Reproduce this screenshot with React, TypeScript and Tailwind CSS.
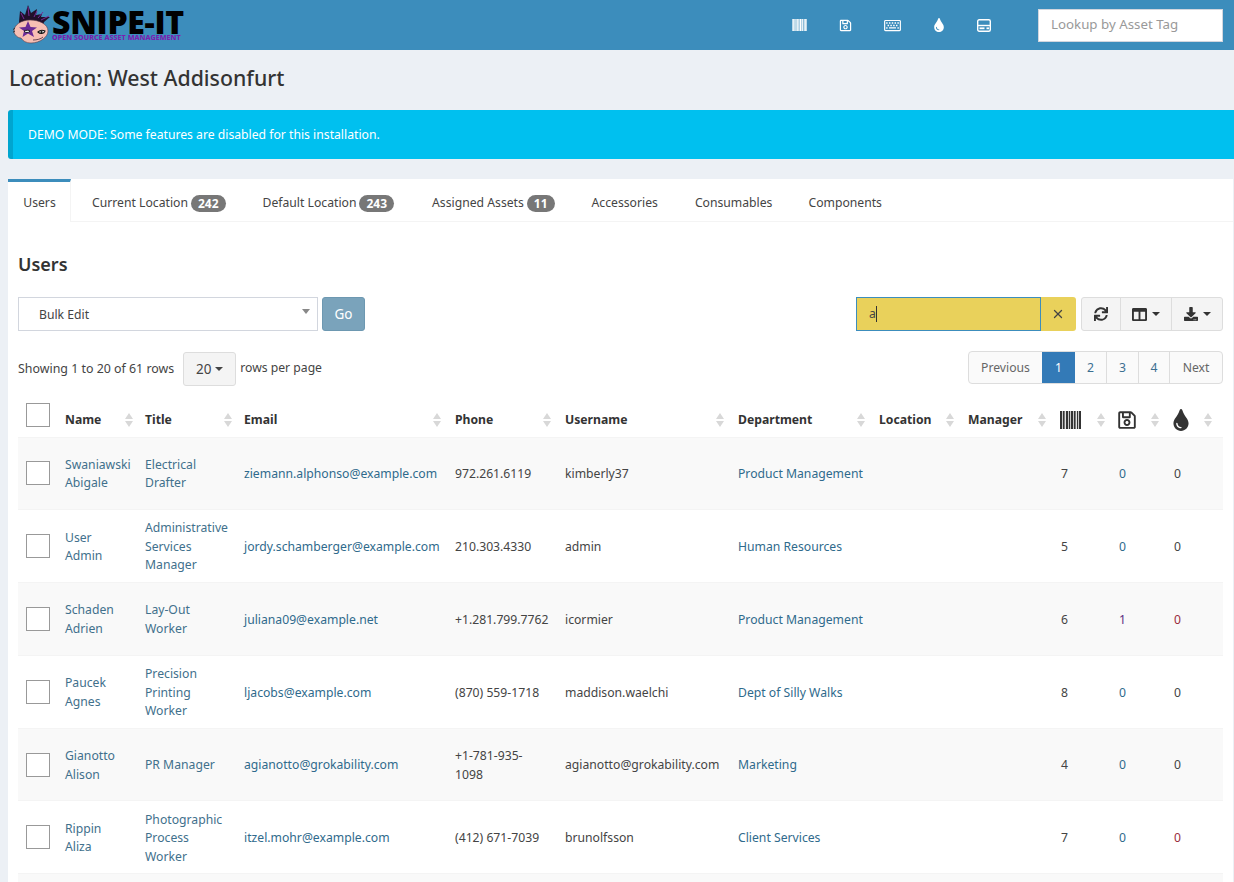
import { FaColumns, FaDownload, FaRegKeyboard, FaRegSave, FaSync, FaTint } from "react-icons/fa";
import { X } from "lucide-react";

const LINK = "text-[#2f6a8c]";
const NAME_LINK = "text-[#41708c]";
const PLAIN = "text-[#444]";

const users = [
  { name: ["Swaniawski", "Abigale"], title: ["Electrical", "Drafter"], email: "ziemann.alphonso@example.com", phone: ["972.261.6119"], username: "kimberly37", dept: "Product Management", counts: ["7", "0", "0"], colors: [PLAIN, LINK, PLAIN] },
  { name: ["User", "Admin"], title: ["Administrative", "Services", "Manager"], email: "jordy.schamberger@example.com", phone: ["210.303.4330"], username: "admin", dept: "Human Resources", counts: ["5", "0", "0"], colors: [PLAIN, LINK, PLAIN] },
  { name: ["Schaden", "Adrien"], title: ["Lay-Out", "Worker"], email: "juliana09@example.net", phone: ["+1.281.799.7762"], username: "icormier", dept: "Product Management", counts: ["6", "1", "0"], colors: [PLAIN, "text-[#5a2d82]", "text-[#9a2b3c]"] },
  { name: ["Paucek", "Agnes"], title: ["Precision", "Printing", "Worker"], email: "ljacobs@example.com", phone: ["(870) 559-1718"], username: "maddison.waelchi", dept: "Dept of Silly Walks", counts: ["8", "0", "0"], colors: [PLAIN, LINK, PLAIN] },
  { name: ["Gianotto", "Alison"], title: ["PR Manager"], email: "agianotto@grokability.com", phone: ["+1-781-935-", "1098"], username: "agianotto@grokability.com", dept: "Marketing", counts: ["4", "0", "0"], colors: [PLAIN, LINK, PLAIN] },
  { name: ["Rippin", "Aliza"], title: ["Photographic", "Process", "Worker"], email: "itzel.mohr@example.com", phone: ["(412) 671-7039"], username: "brunolfsson", dept: "Client Services", counts: ["7", "0", "0"], colors: [PLAIN, LINK, "text-[#9a2b3c]"] },
];

const columnWidths = [39, 80, 99, 211, 110, 173, 141, 89, 92, 58, 55, 58];

const Barcode = ({ className }: { className: string }) => (
  <svg viewBox="0 0 21 18" className={className} fill="currentColor" stroke="currentColor">
    <path d="M0 0h2v18H0zM3 0h1.500v18H3zM6 0h2v18H6zM9 0h1v18H9zM11 0h2v18h-2zM14 0h1.500v18H14zM17 0h1v18h-1zM19 0h2v18h-2z" />
  </svg>
);

const HddIcon = ({ className }: { className: string }) => (
  <svg viewBox="0 0 14 13" className={className} fill="none" stroke="currentColor" strokeWidth="1.400">
    <rect x=".7" y=".7" width="12.600" height="11.600" rx="1.500" />
    <path d="M1 6.500h12" />
    <path d="M2.500 9.300h5" strokeWidth="1.800" />
    <path d="M9.500 9.300h2.500" strokeWidth="1.800" />
  </svg>
);

const Lines = ({ lines }: { lines: string[] }) => (
  <>
    {lines.map((line) => (
      <div key={line}>{line}</div>
    ))}
  </>
);

const SortArrows = () => (
  <span className="flex flex-col gap-[2px] text-[#d8d8d8]">
    <span className="h-0 w-0 border-x-[4px] border-b-[6px] border-x-transparent border-b-current" />
    <span className="h-0 w-0 border-x-[4px] border-t-[6px] border-x-transparent border-t-current" />
  </span>
);

const Caret = () => <span className="inline-block h-0 w-0 border-x-[4px] border-t-[4px] border-x-transparent border-t-current" />;

const Mascot = () => (
  <svg viewBox="0 0 38 40" className="mb-[2px] h-[40px] w-[38px] shrink-0">
    <path d="M6 18 7 7l5 4 3-10 3 8 6-4-1 6 6-1-1 3 9 0-6 5-1 3-24 1z" fill="#20102a" />
    <path d="M8 9l3 6M15 3l1 9M24 7l-3 6M30 8l-5 6M36 12l-8 4" stroke="#7a2a96" strokeWidth="1" fill="none" />
    <path d="M1 27c0-6 7-11 16-11s18 4 18 11c0 6-8 12-17 12-5 0-8-2-10-5-3 0-7-3-7-7z" fill="#f7bfb4" stroke="#5a3a48" strokeWidth=".6" />
    <path d="m15 17 2.500 6 6.500 .5-5 3.500 2 6-6-3.500-5.500 3.500 1.500-6-5-3.500 6.500-.5z" fill="#6a2a96" />
    <path d="M11 27c2-1 5-1 6 0-1 2-5 2-6 0z" fill="#fff" stroke="#111" strokeWidth=".9" />
    <path d="M25 28c2-2 5-2 7-1-1 3-5 3-7 1z" fill="#fff" stroke="#111" strokeWidth="1.100" />
    <circle cx="28.500" cy="28" r="1.100" fill="#111" />
    <path d="M20 36c4 0 8-1 10-3" stroke="#5a3a48" strokeWidth=".9" fill="none" />
    <path d="M2 24-.500 26M2 27-.500 28.500" stroke="#333" strokeWidth="1" />
  </svg>
);

export default function App() {
  return (
    <div className="h-[882px] overflow-hidden bg-[#ecf0f5] font-['Noto_Sans',sans-serif] text-[12.200px] leading-[18.570px] text-[#444]">
      <header className="flex h-[50px] items-center bg-[#3c8dbc] pl-[13px] pr-[11px]">
        <div className="flex items-center">
          <Mascot />
          <div className="ml-[1px] flex flex-col">
            <span className="font-['Open_Sans',sans-serif] text-[32px] leading-[25px] font-extrabold tracking-[-0.300px] whitespace-nowrap text-black">SNIPE-IT</span>
            <span className="text-[7.200px] leading-[7px] font-extrabold whitespace-nowrap text-[#7a1fb0]">OPEN SOURCE ASSET MANAGEMENT</span>
          </div>
        </div>
        <nav className="ml-auto flex items-center gap-[32px] text-white">
          <Barcode className="h-[12px] w-[15px] stroke-[0.500px]" />
          <FaRegSave className="h-[13px] w-[13px]" />
          <FaRegKeyboard className="h-[15px] w-[17px]" />
          <FaTint className="h-[14px] w-[12px]" />
          <HddIcon className="h-[13px] w-[14px]" />
        </nav>
        <input
          placeholder="Lookup by Asset Tag"
          className="ml-[47px] h-[33px] w-[185px] border border-[#d2d6de] bg-white px-[12px] pb-[2px] text-[13.300px] outline-none placeholder:text-[#999]"
        />
      </header>

      <h1 className="pt-[13px] pb-[15px] pl-[9px] text-[21.300px] leading-[29px] font-medium text-[#333]">Location: West Addisonfurt</h1>

      <div className="mt-[3px] ml-[8px] flex h-[49px] items-center rounded-l-[3px] border-l-[5px] border-[#00a5cf] bg-[#00c0ef] pt-[2px] pl-[15px] text-white">
        DEMO MODE: Some features are disabled for this installation.
      </div>

      <main className="mt-[20px] ml-[8px] mr-[1px] bg-white">
        <div className="flex h-[43px] items-stretch border-b border-[#f4f4f4]">
          <div className="-mb-px flex w-[63px] items-center justify-center border-t-[3px] border-r border-[#3c8dbc] border-r-[#f4f4f4] bg-white pt-[3px] pl-[1px]">Users</div>
          <Tab label="Current Location" badge="242" className="ml-[21px]" />
          <Tab label="Default Location" badge="243" className="ml-[37px]" />
          <Tab label="Assigned Assets" badge="11" className="ml-[38px]" />
          <Tab label="Accessories" className="ml-[37px]" />
          <Tab label="Consumables" className="ml-[37px]" />
          <Tab label="Components" className="ml-[36px]" />
        </div>

        <div className="pr-[10px] pl-[10px]">
          <h2 className="pt-[30px] pb-[1px] text-[18px] leading-[24px] font-semibold text-[#333]">Users</h2>

          <div className="mt-[20px] flex h-[34px] items-stretch">
            <div className="relative flex w-[300px] items-center border border-[#d2d6de] bg-white pt-[2px] pl-[20px]">
              Bulk Edit
              <span className="absolute top-[11px] right-[7px] h-0 w-0 border-x-[4px] border-t-[5px] border-x-transparent border-t-[#888]" />
            </div>
            <button className="ml-[4px] w-[43px] rounded-[3px] border border-[#6d98b1] bg-[#7aa3bb] text-[13.500px] text-white">Go</button>

            <div className="ml-auto flex w-[220px] rounded-[3px] bg-[#e9d15b]">
              <div className="flex w-[185px] items-center border border-[#3c8dbc] pl-[12px]">
                a<span className="h-[16px] w-px bg-[#333]" />
              </div>
              <div className="flex flex-1 items-center justify-center pr-[2px]">
                <X className="h-[14px] w-[14px]" strokeWidth={2.200} />
              </div>
            </div>
            <div className="ml-[5px] flex rounded-[3px] border border-[#ddd] bg-[#f4f4f4] text-[#333]">
              <div className="flex w-[39px] items-center justify-center border-r border-[#ddd]">
                <FaSync className="h-[14px] w-[14px]" />
              </div>
              <div className="flex w-[51px] items-center justify-center gap-[5px] border-r border-[#ddd]">
                <FaColumns className="h-[15px] w-[15px]" />
                <Caret />
              </div>
              <div className="flex w-[50px] items-center justify-center gap-[5px]">
                <FaDownload className="h-[14px] w-[14px]" />
                <Caret />
              </div>
            </div>
          </div>

          <div className="mt-[20px] flex h-[35px] items-start">
            <span className="mt-[9px] text-[12.400px]">Showing 1 to 20 of 61 rows</span>
            <div className="mt-px ml-[9px] flex h-[34px] w-[53px] items-center justify-center gap-[4px] rounded-[3px] border border-[#ddd] bg-[#f4f4f4] text-[13.500px]">
              20 <Caret />
            </div>
            <span className="mt-[8px] ml-[4px]">rows per page</span>
            <div className="ml-auto flex h-[33px] overflow-hidden rounded-[4px] border border-[#ddd] bg-[#fafafa] text-[#666]">
              <span className="flex w-[73px] items-center justify-center pt-[2px]">Previous</span>
              <span className="flex w-[33px] items-center justify-center bg-[#337ab7] pt-[2px] text-white">1</span>
              <span className="flex w-[32px] items-center justify-center border-r border-[#ddd] pt-[2px] text-[#3c6f91]">2</span>
              <span className="flex w-[32px] items-center justify-center border-r border-[#ddd] pt-[2px] text-[#3c6f91]">3</span>
              <span className="flex w-[31px] items-center justify-center border-r border-[#ddd] pt-[2px] text-[#3c6f91]">4</span>
              <span className="flex w-[52px] items-center justify-center pt-[2px]">Next</span>
            </div>
          </div>

          <table className="mt-[16px] w-[1205px] table-fixed border-collapse">
            <colgroup>
              {columnWidths.map((width, i) => (
                <col key={i} style={{ width }} />
              ))}
            </colgroup>
            <thead>
              <tr className="h-[35px] border-b border-[#f4f4f4] text-left font-bold text-[#333]">
                <th className="pl-[8px]">
                  <span className="mb-[8px] block h-[24px] w-[24px] border border-[#999]" />
                </th>
                <HeaderCell label="Name" padding="pr-[4px]" />
                <HeaderCell label="Title" padding="pr-[4px]" />
                <HeaderCell label="Email" />
                <HeaderCell label="Phone" />
                <HeaderCell label="Username" />
                <HeaderCell label="Department" />
                <HeaderCell label="Location" />
                <HeaderCell label="Manager" />
                <HeaderCell label={<Barcode className="h-[18px] w-[21px] stroke-[0.300px]" />} padding="pr-[5px]" />
                <HeaderCell label={<FaRegSave className="h-[20px] w-[18px]" />} padding="pr-[6px]" />
                <HeaderCell label={<FaTint className="h-[22px] w-[16px]" />} padding="pr-[11px]" />
              </tr>
            </thead>
            <tbody>
              {users.map((user, i) => (
                <tr key={user.email} className={`h-[72.800px] border-b border-[#f4f4f4] ${i % 2 === 0 ? "bg-[#f9f9f9]" : "bg-white"}`}>
                  <td className="pl-[8px]">
                    <span className="block h-[24px] w-[24px] border border-[#999] bg-white" />
                  </td>
                  <td className={`px-[8px] pt-[2px] ${NAME_LINK}`}>
                    <Lines lines={user.name} />
                  </td>
                  <td className={`px-[8px] pt-[2px] ${NAME_LINK}`}>
                    <Lines lines={user.title} />
                  </td>
                  <td className={`px-[8px] pt-[2px] whitespace-nowrap ${LINK}`}>{user.email}</td>
                  <td className="px-[8px] pt-[2px] whitespace-nowrap">
                    <Lines lines={user.phone} />
                  </td>
                  <td className="px-[8px] pt-[2px] whitespace-nowrap">{user.username}</td>
                  <td className={`px-[8px] pt-[2px] whitespace-nowrap ${LINK}`}>{user.dept}</td>
                  <td />
                  <td />
                  {user.counts.map((count, c) => (
                    <td key={c} className={`px-[8px] pt-[2px] ${user.colors[c]}`}>
                      <span className="ml-[1px]">{count}</span>
                    </td>
                  ))}
                </tr>
              ))}
              <tr className="h-[40px] bg-[#f9f9f9]">
                <td colSpan={12} />
              </tr>
            </tbody>
          </table>
        </div>
      </main>
    </div>
  );
}

function Tab({ label, badge, className }: { label: string; badge?: string; className: string }) {
  return (
    <div className={`flex items-center gap-[3px] pt-[6px] text-[#444] ${className}`}>
      {label}
      {badge && <span className="rounded-[10px] bg-[#777] px-[7px] text-[12px] leading-[17px] font-bold text-white">{badge}</span>}
    </div>
  );
}

function HeaderCell({ label, padding = "pr-[6px]" }: { label: React.ReactNode; padding?: string }) {
  return (
    <th className={`pt-[2px] pl-[8px] font-bold ${padding}`}>
      <div className="flex items-center justify-between">
        <span className="whitespace-nowrap">{label}</span>
        <SortArrows />
      </div>
    </th>
  );
}
